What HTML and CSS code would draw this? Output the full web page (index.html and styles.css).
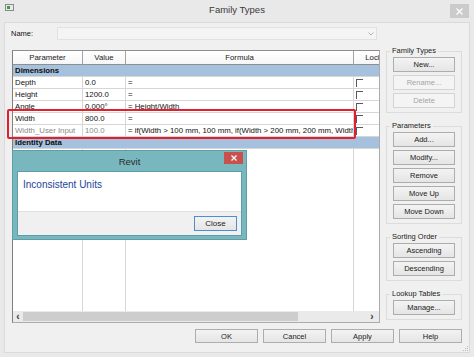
FILE: index.html
```html
<!DOCTYPE html>
<html lang="en">
<head>
    <meta charset="UTF-8">
    <title>Family Types</title>
    <link rel="stylesheet" href="styles.css">
</head>
<body>
    <div class="window">
        <div class="titlebar">
            <svg class="app-icon" width="9" height="7" viewBox="0 0 9 7">
                <rect x="0.5" y="0.5" width="8" height="6" fill="#e9e9e9" stroke="#8a8a8a"/>
                <rect x="2" y="2" width="3" height="3" fill="#3f9a52"/>
            </svg>
            <span class="title">Family Types</span>
            <span class="win-close">
                <svg width="7" height="7" viewBox="0 0 7 7"><path d="M0.5 0.5L6.5 6.5M6.5 0.5L0.5 6.5" stroke="#fff" stroke-width="1.2"/></svg>
            </span>
        </div>

        <div class="client">
            <div class="name-row">
                <label>Name:</label>
                <div class="combo">
                    <svg width="6" height="4" viewBox="0 0 6 4"><path d="M0.5 0.5L3 3L5.5 0.5" fill="none" stroke="#b4b4b4"/></svg>
                </div>
            </div>

            <div class="main">
                <div class="grid-view">
                    <div class="grid-rows">
                        <div class="row head">
                            <div class="cell">Parameter</div>
                            <div class="cell">Value</div>
                            <div class="cell">Formula</div>
                            <div class="cell">Lock</div>
                        </div>
                        <div class="row group">Dimensions</div>
                        <div class="row">
                            <div class="cell">Depth</div>
                            <div class="cell">0.0</div>
                            <div class="cell">=</div>
                            <div class="cell lock"><span class="cb"></span></div>
                        </div>
                        <div class="row">
                            <div class="cell">Height</div>
                            <div class="cell">1200.0</div>
                            <div class="cell">=</div>
                            <div class="cell lock"><span class="cb"></span></div>
                        </div>
                        <div class="row">
                            <div class="cell">Angle</div>
                            <div class="cell">0.000&deg;</div>
                            <div class="cell">= Height/Width</div>
                            <div class="cell lock"><span class="cb"></span></div>
                        </div>
                        <div class="row">
                            <div class="cell">Width</div>
                            <div class="cell">800.0</div>
                            <div class="cell">=</div>
                            <div class="cell lock"><span class="cb"></span></div>
                        </div>
                        <div class="row muted">
                            <div class="cell">Width_User Input</div>
                            <div class="cell">100.0</div>
                            <div class="cell formula">= if(Width &gt; 100 mm, 100 mm, if(Width &gt; 200 mm, 200 mm, Width))</div>
                            <div class="cell lock"><span class="cb"></span></div>
                        </div>
                        <div class="row group">Identity Data</div>
                        <div class="row filler">
                            <div class="cell"></div>
                            <div class="cell"></div>
                            <div class="cell"></div>
                            <div class="cell"></div>
                        </div>
                    </div>
                    <div class="hscroll">
                        <span class="arr">&lsaquo;</span>
                        <span class="thumb"></span>
                        <span class="track"></span>
                        <span class="arr right">&rsaquo;</span>
                    </div>
                </div>

                <div class="side">
                    <fieldset class="group-box">
                        <legend>Family Types</legend>
                        <div class="btn">New...</div>
                        <div class="btn disabled">Rename...</div>
                        <div class="btn disabled">Delete</div>
                    </fieldset>
                    <fieldset class="group-box">
                        <legend>Parameters</legend>
                        <div class="btn">Add...</div>
                        <div class="btn">Modify...</div>
                        <div class="btn">Remove</div>
                        <div class="btn">Move Up</div>
                        <div class="btn">Move Down</div>
                    </fieldset>
                    <fieldset class="group-box">
                        <legend>Sorting Order</legend>
                        <div class="btn">Ascending</div>
                        <div class="btn">Descending</div>
                    </fieldset>
                    <fieldset class="group-box">
                        <legend>Lookup Tables</legend>
                        <div class="btn">Manage...</div>
                    </fieldset>
                </div>
            </div>

            <div class="footer">
                <div class="btn">OK</div>
                <div class="btn">Cancel</div>
                <div class="btn">Apply</div>
                <div class="btn">Help</div>
            </div>
        </div>

        <svg class="grip" width="6" height="6" viewBox="0 0 6 6">
            <rect x="4" y="0" width="1" height="1" fill="#b8b8b8"/>
            <rect x="2" y="2" width="1" height="1" fill="#b8b8b8"/>
            <rect x="4" y="2" width="1" height="1" fill="#b8b8b8"/>
            <rect x="0" y="4" width="1" height="1" fill="#b8b8b8"/>
            <rect x="2" y="4" width="1" height="1" fill="#b8b8b8"/>
            <rect x="4" y="4" width="1" height="1" fill="#b8b8b8"/>
        </svg>

        <!-- red markup drawn over the two width rows -->
        <div class="highlight"></div>

        <div class="msgbox">
            <div class="msg-title">
                <span></span>
                <span class="msg-caption">Revit</span>
                <span class="msg-close">
                    <svg width="6" height="6" viewBox="0 0 6 6"><path d="M0.5 0.5L5.5 5.5M5.5 0.5L0.5 5.5" stroke="#fff" stroke-width="1.3"/></svg>
                </span>
            </div>
            <div class="msg-inner">
                <div class="msg-content">Inconsistent Units</div>
                <div class="msg-footer">
                    <div class="btn default">Close</div>
                </div>
            </div>
        </div>
    </div>
</body>
</html>
```

FILE: styles.css
```css
* {
    box-sizing: border-box;
}

body {
    margin: 0;
    font-family: "Liberation Sans", Arial, sans-serif;
    font-size: 7.5px;
    color: #111;
    background-color: #e9e9e9;
}

.window {
    position: relative;
    width: 474px;
    height: 357px;
    padding: 0 4px 4px;
    display: flex;
    flex-direction: column;
    overflow: hidden;
}

.titlebar {
    height: 22px;
    flex: none;
    display: grid;
    grid-template-columns: 1fr auto 1fr;
    align-items: start;
}

.app-icon {
    margin: 4px 0 0 1px;
}

.title {
    font-size: 9.5px;
    line-height: 10px;
    margin-top: 5px;
    color: #3a3a3a;
}

.win-close {
    justify-self: end;
    width: 19px;
    height: 14px;
    margin: 4px 1px 0 0;
    background-color: #cbcbcb;
    display: flex;
    align-items: center;
    justify-content: center;
}

.client {
    flex: 1;
    background-color: #f0f0f0;
    border: 1px solid #dadada;
    padding: 4px 7px 0 7px;
    display: flex;
    flex-direction: column;
}

.name-row {
    display: flex;
    align-items: center;
    height: 13px;
    margin-bottom: 6px;
}

.name-row label {
    width: 46px;
    margin-left: -1px;
}

.combo {
    width: 320px;
    height: 13px;
    border: 1px solid #e1e1e1;
    background-color: #f4f4f4;
    display: flex;
    align-items: center;
    justify-content: flex-end;
    padding-right: 2px;
}

.main {
    display: flex;
    gap: 6px;
    height: 277px;
    align-items: flex-start;
}

.grid-view {
    margin-top: 4px;
    width: 368px;
    height: 273px;
    border: 1px solid #ababab;
    border-left-color: #7f7f7f;
    border-top-color: #8e8e8e;
    background-color: #fff;
    display: flex;
    flex-direction: column;
    overflow: hidden;
    font-size: 7.8px;
}

.grid-rows {
    flex: 1;
    display: flex;
    flex-direction: column;
    overflow: hidden;
}

.row {
    flex: none;
    display: grid;
    grid-template-columns: 70px 43px 228px 40px;
    height: 12px;
}

.cell {
    border-right: 1px solid #d6d6d6;
    border-bottom: 1px solid #d6d6d6;
    padding: 0 2px;
    line-height: 11px;
    white-space: nowrap;
    overflow: hidden;
}

.row.head {
    height: 14px;
}

.row.head .cell {
    text-align: center;
    line-height: 13px;
    color: #222;
    background: linear-gradient(#ffffff, #f6f6f6);
    border-right-color: #a3a3a3;
    border-bottom-color: #8f8f8f;
}

.row.group {
    display: block;
    width: 381px;
    background-color: #a6c1dd;
    border-bottom: 1px solid #d6d6d6;
    padding-left: 2px;
    line-height: 11px;
    font-weight: bold;
    color: #0c0c0c;
}

.row.muted {
    color: #8a8a8a;
}

.row.muted .formula {
    color: #111;
}

.cell.lock {
    padding: 2px 0 0 2px;
}

.cb {
    display: block;
    width: 7px;
    height: 8px;
    border-top: 1px solid #5a5a5a;
    border-left: 1px solid #5a5a5a;
}

.row.filler {
    flex: 1;
    height: auto;
}

.row.filler .cell {
    border-bottom: none;
}

.hscroll {
    flex: none;
    height: 11px;
    display: flex;
    align-items: center;
    background-color: #eaeaea;
}

.hscroll .arr {
    width: 10px;
    text-align: center;
    font-size: 10px;
    line-height: 11px;
    font-weight: bold;
    color: #333;
}

.hscroll .arr.right {
    width: 14px;
}

.thumb {
    width: 275px;
    height: 9px;
    background-color: #cdcdcd;
}

.track {
    flex: 1;
}

.side {
    width: 76px;
    display: flex;
    flex-direction: column;
    gap: 8px;
}

.group-box {
    margin: 0;
    padding: 1px 6px 4px;
    border: 1px solid #dcdcdc;
    min-width: 0;
    display: flex;
    flex-direction: column;
    gap: 3px;
}

.group-box legend {
    padding: 0 2px;
    margin-left: -3px;
    line-height: 10px;
    color: #222;
}

.btn {
    height: 15px;
    border: 1px solid #adadad;
    background: linear-gradient(#f3f3f3, #e5e5e5);
    display: flex;
    align-items: center;
    justify-content: center;
    color: #1a1a1a;
}

.btn.disabled {
    color: #a6a6a6;
    border-color: #d4d4d4;
    background: #f4f4f4;
}

.footer {
    display: flex;
    justify-content: flex-end;
    gap: 5px;
    margin-top: 6px;
}

.footer .btn {
    width: 63px;
    height: 14px;
}

.grip {
    position: absolute;
    right: 5px;
    bottom: 5px;
}

.highlight {
    position: absolute;
    left: 7px;
    top: 109px;
    width: 349px;
    height: 30px;
    border: 2px solid #e2202d;
    border-radius: 2px;
}

.msgbox {
    position: absolute;
    left: 12px;
    top: 150px;
    width: 235px;
    height: 90px;
    background-color: #79b7bf;
    border: 1px solid #5f9ea6;
    padding: 0 4px 3px;
    display: flex;
    flex-direction: column;
}

.msg-title {
    height: 20px;
    flex: none;
    display: grid;
    grid-template-columns: 1fr auto 1fr;
    align-items: start;
}

.msg-caption {
    font-size: 9.5px;
    line-height: 10px;
    margin-top: 6px;
    color: #2b2b2b;
}

.msg-close {
    justify-self: end;
    width: 19px;
    height: 12px;
    margin: 1px -1px 0 0;
    background-color: #c9504c;
    display: flex;
    align-items: center;
    justify-content: center;
}

.msg-inner {
    flex: 1;
    border: 1px solid #5f9ea6;
    display: flex;
    flex-direction: column;
}

.msg-content {
    height: 39px;
    background-color: #fff;
    padding: 7px 0 0 5px;
    font-size: 10px;
    line-height: 12px;
    color: #23449b;
}

.msg-footer {
    flex: 1;
    background-color: #f0f0f0;
    border-top: 1px solid #dfdfdf;
    display: flex;
    align-items: center;
    justify-content: flex-end;
    padding-right: 4px;
}

.btn.default {
    width: 43px;
    height: 15px;
    border-color: #4a90d0;
    font-size: 8px;
}
```
